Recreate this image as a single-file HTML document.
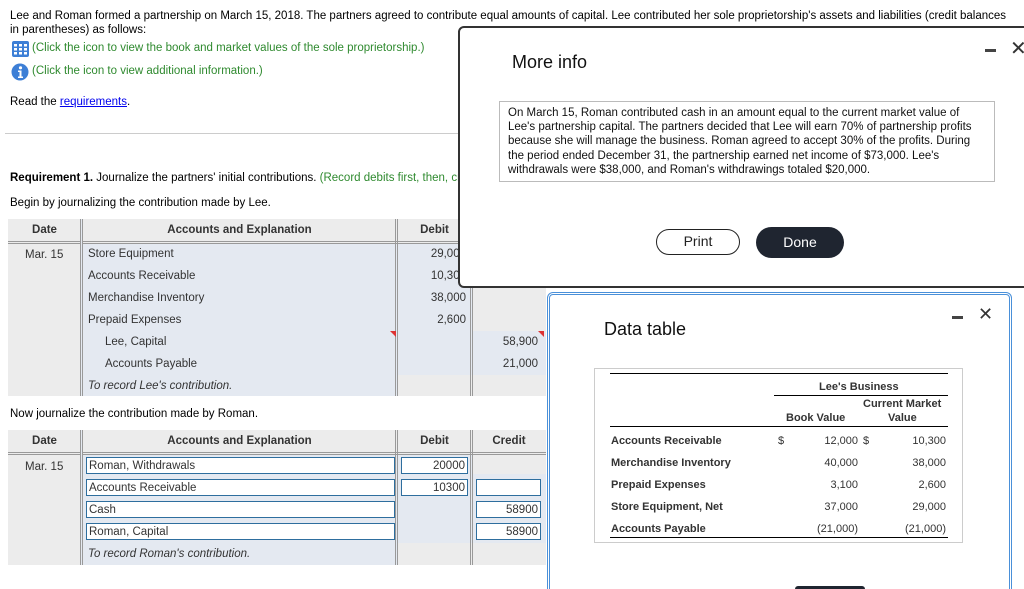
<!DOCTYPE html>
<html style="overflow:hidden;width:1024px;height:589px"><head><meta charset="utf-8"><style>
body{margin:0;width:1024px;height:589px;overflow:hidden;background:#fff;font-family:"Liberation Sans",Arial,sans-serif;font-size:11.5px;color:#000;position:relative}
.a{position:absolute;white-space:nowrap}
.g{color:#2f8a2f}
.tb{position:absolute;left:8px;width:538px;background:#e4e9f1}
.hd{position:absolute;background:#ececec;font-weight:bold;color:#333;text-align:center;line-height:22px;border-bottom:3px double #999}
.vl{position:absolute;border-left:3px double #999}
.c{position:absolute;color:#333}
.in{position:absolute;border:1px solid #2e6e9e;background:#fff;height:17px;line-height:17px;box-sizing:border-box;color:#333;padding:0 2px}
.gr{position:absolute;background:#ececec}
</style></head><body>
<div class="a" style="left:10px;top:10px">Lee and Roman formed a partnership on March 15, 2018. The partners agreed to contribute equal amounts of capital. Lee contributed her sole proprietorship's assets and liabilities (credit balances</div>
<div class="a" style="left:10px;top:24px">in parentheses) as follows:</div>
<svg class="a" style="left:12px;top:41px" width="17" height="16"><rect x="0" y="0" width="17" height="16" rx="2" fill="#3d7fd6"/><g fill="#fff"><rect x="2" y="3" width="3" height="2.5"/><rect x="7" y="3" width="3" height="2.5"/><rect x="12" y="3" width="3" height="2.5"/><rect x="2" y="7" width="3" height="2.5"/><rect x="7" y="7" width="3" height="2.5"/><rect x="12" y="7" width="3" height="2.5"/><rect x="2" y="11" width="3" height="2.5"/><rect x="7" y="11" width="3" height="2.5"/><rect x="12" y="11" width="3" height="2.5"/></g></svg>
<div class="a g" style="left:32px;top:42px">(Click the icon to view the book and market values of the sole proprietorship.)</div>
<svg class="a" style="left:11px;top:63px" width="18" height="18"><circle cx="9" cy="9" r="8.5" fill="#3d7fd6"/><circle cx="9.5" cy="4.8" r="1.6" fill="#fff"/><path d="M7 7.5h3.5v6h1.5v1.5H7v-1.5h1.5v-4.5H7z" fill="#fff"/></svg>
<div class="a g" style="left:32px;top:65px">(Click the icon to view additional information.)</div>
<div class="a" style="left:10px;top:96px">Read the <span style="color:#0000ee;text-decoration:underline">requirements</span>.</div>
<div class="a" style="left:5px;top:133px;width:460px;border-top:1px solid #ccc"></div>
<div class="a" style="left:10px;top:172px"><b>Requirement 1.</b> Journalize the partners' initial contributions. <span class="g">(Record debits first, then, cr</span></div>
<div class="a" style="left:10px;top:197px">Begin by journalizing the contribution made by Lee.</div>

<!-- Lee table -->
<div class="tb" style="top:219px;height:177px"></div>
<div class="gr" style="left:8px;top:219px;width:73px;height:177px"></div>
<div class="gr" style="left:82px;top:375px;width:464px;height:21px;background:#e4e9f1"></div>
<div class="gr" style="left:397px;top:375px;width:149px;height:21px"></div>
<div class="gr" style="left:472px;top:241px;width:74px;height:90px"></div>
<div class="gr" style="left:397px;top:331px;width:75px;height:44px;background:#e4e9f1"></div>
<div class="hd" style="left:8px;top:219px;width:73px">Date</div>
<div class="hd" style="left:82px;top:219px;width:315px">Accounts and Explanation</div>
<div class="hd" style="left:397px;top:219px;width:75px">Debit</div>
<div class="hd" style="left:472px;top:219px;width:74px">Credit</div>
<div class="vl" style="left:80px;top:219px;height:177px"></div>
<div class="vl" style="left:395px;top:219px;height:177px"></div>
<div class="vl" style="left:470px;top:219px;height:177px"></div>
<div class="c" style="left:25px;top:249px">Mar. 15</div>
<div class="c" style="left:88px;top:248px">Store Equipment</div>
<div class="c" style="left:88px;top:270px">Accounts Receivable</div>
<div class="c" style="left:88px;top:292px">Merchandise Inventory</div>
<div class="c" style="left:88px;top:314px">Prepaid Expenses</div>
<div class="c" style="left:105px;top:336px">Lee, Capital</div>
<div class="c" style="left:105px;top:358px">Accounts Payable</div>
<div class="c" style="left:88px;top:380px;font-style:italic">To record Lee's contribution.</div>
<div class="c" style="left:400px;width:66px;text-align:right;top:248px">29,000</div>
<div class="c" style="left:400px;width:66px;text-align:right;top:270px">10,300</div>
<div class="c" style="left:400px;width:66px;text-align:right;top:292px">38,000</div>
<div class="c" style="left:400px;width:66px;text-align:right;top:314px">2,600</div>
<div class="c" style="left:475px;width:63px;text-align:right;top:336px">58,900</div>
<div class="c" style="left:475px;width:63px;text-align:right;top:358px">21,000</div>
<svg class="a" style="left:390px;top:331px" width="6" height="6"><path d="M0 0h6v6z" fill="#d33"/></svg>
<svg class="a" style="left:538px;top:331px" width="6" height="6"><path d="M0 0h6v6z" fill="#d33"/></svg>

<div class="a" style="left:10px;top:408px">Now journalize the contribution made by Roman.</div>
<!-- Roman table -->
<div class="tb" style="top:430px;height:135px"></div>
<div class="gr" style="left:8px;top:430px;width:73px;height:135px"></div>
<div class="gr" style="left:397px;top:543px;width:149px;height:22px"></div>
<div class="gr" style="left:472px;top:452px;width:74px;height:22px"></div>
<div class="hd" style="left:8px;top:430px;width:73px">Date</div>
<div class="hd" style="left:82px;top:430px;width:315px">Accounts and Explanation</div>
<div class="hd" style="left:397px;top:430px;width:75px">Debit</div>
<div class="hd" style="left:472px;top:430px;width:74px">Credit</div>
<div class="vl" style="left:80px;top:430px;height:135px"></div>
<div class="vl" style="left:395px;top:430px;height:135px"></div>
<div class="vl" style="left:470px;top:430px;height:135px"></div>
<div class="c" style="left:25px;top:461px">Mar. 15</div>
<div class="in" style="left:86px;top:457px;width:309px">Roman, Withdrawals</div>
<div class="in" style="left:86px;top:479px;width:309px">Accounts Receivable</div>
<div class="in" style="left:86px;top:501px;width:309px">Cash</div>
<div class="in" style="left:86px;top:523px;width:309px">Roman, Capital</div>
<div class="in" style="left:401px;top:457px;width:67px;text-align:right">20000</div>
<div class="in" style="left:401px;top:479px;width:67px;text-align:right">10300</div>
<div class="in" style="left:476px;top:479px;width:65px"></div>
<div class="in" style="left:476px;top:501px;width:65px;text-align:right">58900</div>
<div class="in" style="left:476px;top:523px;width:65px;text-align:right">58900</div>
<div class="c" style="left:88px;top:548px;font-style:italic">To record Roman's contribution.</div>

<!-- More info modal -->
<div class="a" style="left:458px;top:26px;width:580px;height:262px;background:#fff;border:2px solid #333;border-radius:6px;box-sizing:border-box"></div>
<div class="a" style="left:512px;top:52px;font-size:18px;color:#111">More info</div>
<div class="a" style="left:985px;top:49px;width:11px;height:3px;background:#444"></div>
<div class="a" style="left:1010px;top:36px;font-size:20px;color:#333">✕</div>
<div class="a" style="left:499px;top:101px;width:496px;height:81px;border:1px solid #bbb;box-sizing:border-box"></div>
<div class="a" style="left:508px;top:106px;line-height:14.2px;color:#111;white-space:normal;width:477px">On March 15, Roman contributed cash in an amount equal to the current market value of Lee's partnership capital. The partners decided that Lee will earn 70% of partnership profits because she will manage the business. Roman agreed to accept 30% of the profits. During the period ended December 31, the partnership earned net income of $73,000. Lee's withdrawals were $38,000, and Roman's withdrawings totaled $20,000.</div>
<div class="a" style="left:656px;top:229px;width:84px;height:26px;border:1.5px solid #222;border-radius:14px;box-sizing:border-box;text-align:center;line-height:23px;font-size:14px;color:#222">Print</div>
<div class="a" style="left:756px;top:227px;width:88px;height:31px;background:#1f2530;border-radius:16px;text-align:center;line-height:31px;font-size:14px;color:#fff">Done</div>

<!-- Data table modal -->
<div class="a" style="left:547px;top:292px;width:465px;height:310px;background:#fff;border:3px double #4a90d9;border-radius:6px;box-sizing:border-box"></div>
<div class="a" style="left:604px;top:319px;font-size:18px;color:#111">Data table</div>
<div class="a" style="left:952px;top:316px;width:11px;height:3px;background:#444"></div>
<div class="a" style="left:978px;top:304px;font-size:18px;color:#333">✕</div>
<div class="a" style="left:594px;top:368px;width:369px;height:175px;border:1px solid #ccc;box-sizing:border-box"></div>
<div class="a" style="left:610px;top:373px;width:338px;border-top:1px solid #000"></div>
<div class="a" style="left:774px;top:395px;width:174px;border-top:1px solid #000"></div>
<div class="a" style="left:610px;top:426px;width:338px;border-top:1px solid #000"></div>
<div class="a" style="left:610px;top:537px;width:338px;border-top:1px solid #000"></div>
<div class="a" style="left:819px;top:381px;font-size:11px;font-weight:bold;color:#333">Lee's Business</div>
<div class="a" style="left:863px;top:398px;font-size:11px;font-weight:bold;color:#333">Current Market</div>
<div class="a" style="left:888px;top:412px;font-size:11px;font-weight:bold;color:#333">Value</div>
<div class="a" style="left:786px;top:412px;font-size:11px;font-weight:bold;color:#333">Book Value</div>
<div class="a" style="left:611px;top:430px;font-size:11px;font-weight:bold;color:#333;line-height:22px">Accounts Receivable<br>Merchandise Inventory<br>Prepaid Expenses<br>Store Equipment, Net<br>Accounts Payable</div>
<div class="a" style="left:778px;top:430px;font-size:11px;color:#333;line-height:22px">$</div>
<div class="a" style="left:800px;top:430px;font-size:11px;width:58px;text-align:right;color:#333;line-height:22px">12,000<br>40,000<br>3,100<br>37,000<br>(21,000)</div>
<div class="a" style="left:863px;top:430px;font-size:11px;color:#333;line-height:22px">$</div>
<div class="a" style="left:880px;top:430px;font-size:11px;width:66px;text-align:right;color:#333;line-height:22px">10,300<br>38,000<br>2,600<br>29,000<br>(21,000)</div>
<div class="a" style="left:795px;top:586px;width:70px;height:6px;background:#1f2530;border-radius:3px"></div>
</body></html>
